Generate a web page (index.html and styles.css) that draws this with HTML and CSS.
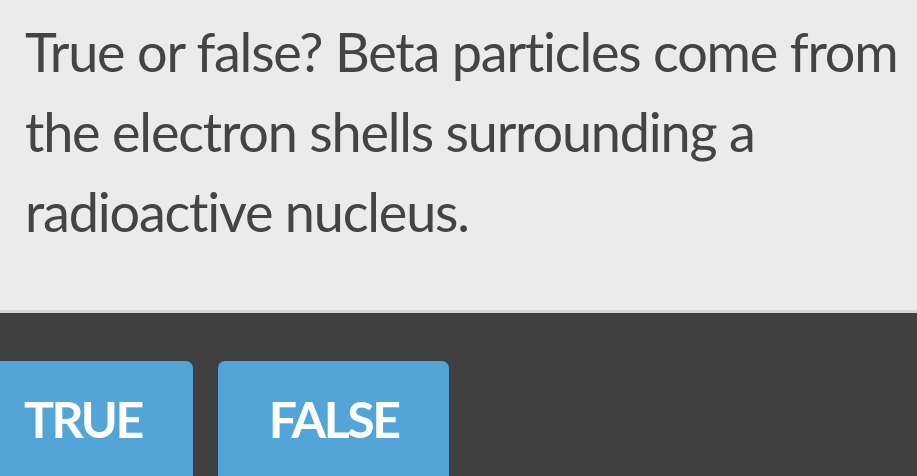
FILE: index.html
```html
<!DOCTYPE html>
<html lang="en">
<head>
    <meta charset="UTF-8">
    <meta name="viewport" content="width=device-width, initial-scale=1.0">
    <title>True or false</title>
    <link rel="stylesheet" href="styles.css">
</head>
<body>

    <!-- Frage -->
    <div class="question">
        <p>True or false? Beta particles come from the electron shells surrounding a radioactive nucleus.</p>
    </div>

    <!-- Antworten -->
    <div class="answers">
        <div class="answer-row">
            <button class="answer-button">TRUE</button>
            <button class="answer-button">FALSE</button>
        </div>
    </div>

</body>
</html>
```

FILE: styles.css
```css
body {
    margin: 0;
    font-family: Lato, "Open Sans", Arial, sans-serif;
    background-color: #404040;
    overflow: hidden;
}

.question {
    background-color: #ebebeb;
    height: 313px;
    border-bottom: 3px solid #d6d6d6;
    padding: 12px 15px 0 25px;
    box-sizing: border-box;
}

.question p {
    margin: 0;
    max-width: 875px;
    font-size: 54px;
    line-height: 80px;
    letter-spacing: -1.2px;
    font-variant-ligatures: none;
    color: #444;
}

.answers {
    padding-top: 48px;
}

.answer-row {
    display: flex;
    gap: 25px;
    margin-left: -27px;
}

.answer-button {
    height: 116px;
    padding: 0 51px;
    background-color: #52a5d6;
    border: none;
    border-radius: 7px 7px 0 0;
    color: #fff;
    font-family: Lato, "Open Sans", Arial, sans-serif;
    font-size: 50px;
    font-weight: 700;
    letter-spacing: -2.5px;
    cursor: pointer;
}
```
